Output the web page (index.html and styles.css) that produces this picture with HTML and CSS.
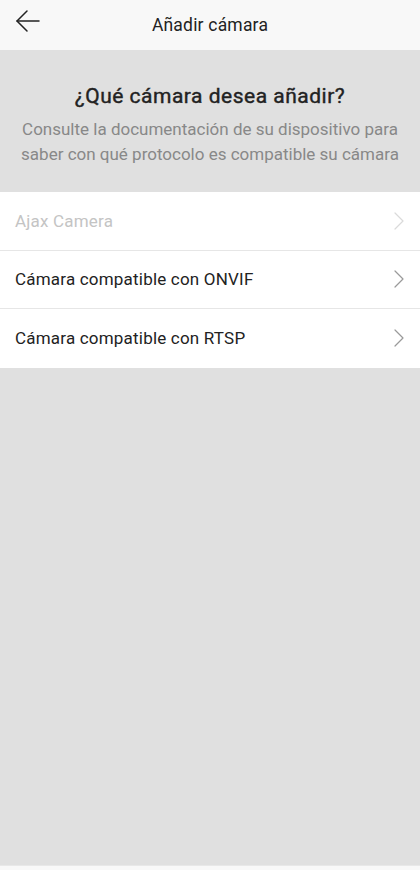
FILE: index.html
```html
<!DOCTYPE html>
<html lang="es">

<head>
    <meta charset="UTF-8">
    <meta name="viewport" content="width=device-width, initial-scale=1.0">
    <link rel="stylesheet" href="styles.css">
    <title>Añadir cámara</title>
</head>

<body>
    <div class="screen">
        <header class="top-bar">
            <button class="back-btn" type="button" aria-label="Atrás">
                <svg width="26" height="24" viewBox="0 0 26 24" fill="none" stroke="#222" stroke-width="1.5" stroke-linecap="round" stroke-linejoin="round">
                    <path d="M2 12h22"></path>
                    <path d="M12 2L2 12l10 10"></path>
                </svg>
            </button>
            <h1 class="top-title">Añadir cámara</h1>
        </header>

        <section class="intro">
            <h2 class="intro-title">¿Qué cámara desea añadir?</h2>
            <p class="intro-text">Consulte la documentación de su dispositivo para saber con qué protocolo es compatible su cámara</p>
        </section>

        <ul class="camera-list">
            <li class="camera-item disabled">
                <span>Ajax Camera</span>
                <svg class="chevron" width="10" height="18" viewBox="0 0 10 18" fill="none" stroke-width="1.2" stroke-linecap="round" stroke-linejoin="round">
                    <path d="M1 1l8 8-8 8"></path>
                </svg>
            </li>
            <li class="camera-item">
                <span>Cámara compatible con ONVIF</span>
                <svg class="chevron" width="10" height="18" viewBox="0 0 10 18" fill="none" stroke-width="1.2" stroke-linecap="round" stroke-linejoin="round">
                    <path d="M1 1l8 8-8 8"></path>
                </svg>
            </li>
            <li class="camera-item">
                <span>Cámara compatible con RTSP</span>
                <svg class="chevron" width="10" height="18" viewBox="0 0 10 18" fill="none" stroke-width="1.2" stroke-linecap="round" stroke-linejoin="round">
                    <path d="M1 1l8 8-8 8"></path>
                </svg>
            </li>
        </ul>

        <div class="filler"></div>
        <div class="bottom-bar"></div>
    </div>
</body>

</html>
```

FILE: styles.css
```css
* {
    box-sizing: border-box;
}

body {
    margin: 0;
    background-color: #e0e0e0;
    font-family: Roboto, "Noto Sans", sans-serif;
    color: #222;
}

.screen {
    height: 870px;
    display: flex;
    flex-direction: column;
}

.top-bar {
    height: 50px;
    flex-shrink: 0;
    display: flex;
    align-items: center;
    justify-content: center;
    position: relative;
    background-color: #f8f8f8;
}

.back-btn {
    position: absolute;
    left: 15px;
    top: 9px;
    padding: 0;
    border: none;
    background: none;
    display: flex;
}

.top-title {
    margin: 0;
    font-size: 17.5px;
    font-weight: 400;
    letter-spacing: 0.2px;
    color: #222;
}

.intro {
    height: 142px;
    flex-shrink: 0;
    padding: 32px 8px 0;
    text-align: center;
}

.intro-title {
    margin: 0 0 7px;
    font-size: 21px;
    font-weight: 400;
    line-height: 28px;
    letter-spacing: 0.5px;
    color: #222;
    -webkit-text-stroke: 0.4px #222;
}

.intro-text {
    margin: 0;
    font-size: 17px;
    line-height: 25px;
    color: #888;
}

.camera-list {
    margin: 0;
    padding: 0;
    list-style: none;
    background-color: #fff;
}

.camera-item {
    height: 58.5px;
    display: flex;
    align-items: center;
    justify-content: space-between;
    padding: 0 16px 0 15px;
    border-bottom: 1px solid #e6e6e6;
    font-size: 17px;
    letter-spacing: 0.2px;
    color: #222;
}

.camera-item:last-child {
    border-bottom: none;
}

.chevron {
    stroke: #9a9a9a;
}

.camera-item.disabled {
    color: #c4c4c4;
}

.camera-item.disabled .chevron {
    stroke: #dadada;
}

.filler {
    flex: 1;
}

.bottom-bar {
    height: 5px;
    border-top: 1px solid #e8e8e8;
    background-color: #f8f8f8;
}
```
